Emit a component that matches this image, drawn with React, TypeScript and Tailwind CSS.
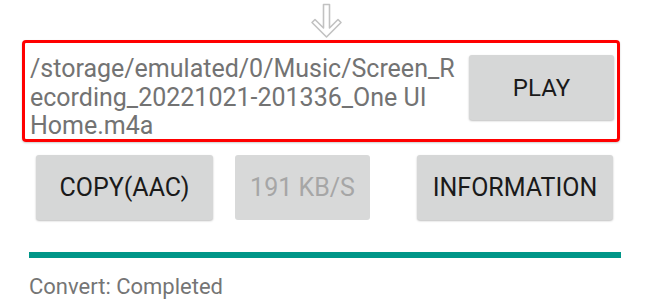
export default function App() {
  return (
    <div className="w-[650px] h-[305px] bg-white overflow-hidden font-['Roboto',sans-serif]">
      {/* drop-target arrow */}
      <div className="flex justify-center pt-[3px]">
        <svg width="36" height="37" viewBox="0 0 36 37" fill="none">
          <polygon
            points="16.5,1.5 22.5,1.5 22.5,25 31,16.5 34,19.5 19.5,34 5,19.5 8,16.5 16.5,25"
            stroke="#c2c2c2"
            strokeWidth="1.6"
            strokeLinejoin="round"
            fill="#ffffff"
          />
        </svg>
      </div>

      <div className="ml-[22px] w-[598px] h-[102px] border-[3px] border-[#ff0000] rounded-[4px] shadow-[0_1px_2px_rgba(0,0,0,0.2)] flex">
        <div className="w-[440px] pl-[5px] pt-[12px] text-[25px] leading-[28.5px] text-[#737373] [overflow-wrap:anywhere]">
          /storage/emulated/0/Music/Screen_Recording_20221021-201336_One UI Home.m4a
        </div>
        <div className="flex-1 flex justify-end pt-[12px] pr-[3px]">
          <button className="w-[145px] h-[65px] rounded-[3px] bg-[#d6d7d7] shadow-[0_1px_2px_rgba(0,0,0,0.25)] text-[24px] text-[#1a1a1a]">
            PLAY
          </button>
        </div>
      </div>

      <div className="flex mt-[13px] pl-[36px]">
        <button className="w-[177px] h-[65px] rounded-[3px] bg-[#d6d7d7] shadow-[0_1px_2px_rgba(0,0,0,0.25)] text-[25px] text-[#1a1a1a]">
          COPY(AAC)
        </button>
        <button className="ml-[22px] w-[135px] h-[65px] rounded-[3px] bg-[#d8d9d9] text-[25px] text-[#a6a6a6]">
          191 KB/S
        </button>
        <button className="ml-[47px] w-[196px] h-[65px] rounded-[3px] bg-[#d6d7d7] shadow-[0_1px_2px_rgba(0,0,0,0.25)] text-[25px] text-[#1a1a1a]">
          INFORMATION
        </button>
      </div>

      <div className="ml-[29px] mt-[32px] w-[592px] h-[6px] bg-[#009688]" />

      <div className="ml-[29px] mt-[16px] text-[22px] leading-[26px] text-[#757575]">
        Convert: Completed
      </div>
    </div>
  );
}
